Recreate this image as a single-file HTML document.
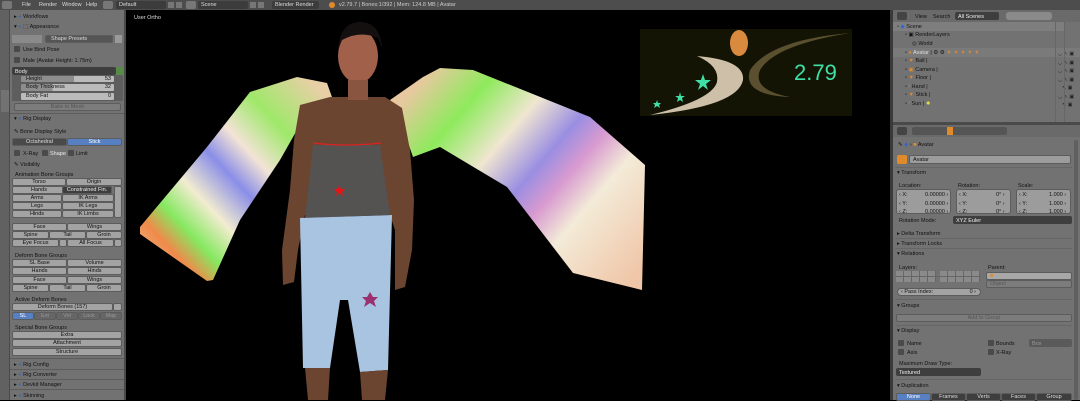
<!DOCTYPE html>
<html><head><meta charset="utf-8"><style>
*{margin:0;padding:0;box-sizing:border-box}
body{width:1080px;height:400px;overflow:hidden;background:#000;font-family:"Liberation Sans",sans-serif;font-size:5.5px;color:#111;position:relative}
.a{position:absolute;white-space:nowrap;line-height:1}
.b{position:absolute;background:#a3a3a3;border:1px solid #5c5c5c;border-radius:2px;font-size:5.5px;color:#111;text-align:center;white-space:nowrap;overflow:hidden}
.d{position:absolute;background:#3e3e3e;border-radius:2px;color:#eee;font-size:5.5px;padding-left:3px;white-space:nowrap}
.t{position:absolute;font-size:5.5px;color:#111;white-space:nowrap}
.cb{position:absolute;width:6px;height:6px;background:#4a4a4a;border-radius:1px}
.bl{background:#5680c2!important;color:#fff}
</style></head><body>
<!-- top header -->
<div class="a" style="left:0;top:0;width:1080px;height:10px;background:#4d4d4d"></div>
<div class="a" style="left:2px;top:1px;width:10px;height:8px;background:#777;border-radius:2px"></div>
<div class="a" style="left:22px;top:3px;color:#ddd">File</div>
<div class="a" style="left:39px;top:3px;color:#ddd">Render</div>
<div class="a" style="left:62px;top:3px;color:#ddd">Window</div>
<div class="a" style="left:86px;top:3px;color:#ddd">Help</div>
<div class="a" style="left:103px;top:1px;width:10px;height:8px;background:#777;border-radius:2px"></div>
<div class="a" style="left:116px;top:1px;width:50px;height:8px;background:#3c3c3c;border-radius:2px;color:#ddd;padding:2px 3px">Default</div>
<div class="a" style="left:168px;top:2px;width:6px;height:6px;background:#777"></div>
<div class="a" style="left:176px;top:2px;width:6px;height:6px;background:#777"></div>
<div class="a" style="left:186px;top:1px;width:10px;height:8px;background:#777;border-radius:2px"></div>
<div class="a" style="left:198px;top:1px;width:50px;height:8px;background:#3c3c3c;border-radius:2px;color:#ddd;padding:2px 3px">Scene</div>
<div class="a" style="left:250px;top:2px;width:6px;height:6px;background:#777"></div>
<div class="a" style="left:258px;top:2px;width:6px;height:6px;background:#777"></div>
<div class="a" style="left:272px;top:1px;width:47px;height:8px;background:#3c3c3c;border-radius:2px;color:#ddd;padding:2px 3px">Blender Render</div>
<div class="a" style="left:329px;top:2px;width:6px;height:6px;background:#e08a2a;border-radius:3px"></div>
<div class="a" style="left:339px;top:3px;color:#ccc">v2.79.7 | Bones:1/392 | Mem: 124.8 MB | Avatar</div>

<!-- left panel -->
<div class="a" style="left:0;top:10px;width:126px;height:390px;background:#727272"></div>
<div class="a" style="left:0;top:10px;width:10px;height:390px;background:#616161;border-right:1px solid #4a4a4a"></div>
<div class="a" style="left:1px;top:90px;width:8px;height:22px;background:#727272"></div>
<div class="a" style="left:124px;top:10px;width:2px;height:390px;background:#4a4a4a"></div>
<div class="t" style="left:14px;top:14px">▸ <span style="color:#3a6db0">●</span> Workflows</div>
<div class="t" style="left:14px;top:24px">▾ <span style="color:#3a6db0">●</span> ⬚ Appearance</div>
<div class="a" style="left:12px;top:35px;width:30px;height:8px;background:#8a8a8a"></div>
<div class="b" style="left:45px;top:35px;width:68px;height:8px;background:#555;color:#ddd;text-align:left;padding-left:5px">Shape Presets</div>
<div class="a" style="left:115px;top:35px;width:7px;height:8px;background:#999"></div>
<div class="cb" style="left:14px;top:46px"></div><div class="t" style="left:23px;top:47px">Use Bind Pose</div>
<div class="cb" style="left:14px;top:57px"></div><div class="t" style="left:23px;top:58px">Male (Avatar Height: 1.75m)</div>
<div class="d" style="left:12px;top:67px;width:104px;height:8px;padding-top:1.5px">Body</div>
<div class="a" style="left:116px;top:67px;width:7px;height:8px;background:#5a8a4a"></div>
<div class="a" style="left:12px;top:75px;width:111px;height:26px;background:#5e5e5e"></div>
<div class="b" style="left:20px;top:75px;width:95px;height:8px;text-align:left;padding-left:5px;background:linear-gradient(90deg,#8d8d8d 57%,#bbb 57%)">Height<span style="position:absolute;right:3px">53</span></div>
<div class="b" style="left:20px;top:83px;width:95px;height:9px;text-align:left;padding-left:5px;background:linear-gradient(90deg,#8d8d8d 34%,#bbb 34%)">Body Thickness<span style="position:absolute;right:3px">32</span></div>
<div class="b" style="left:20px;top:92px;width:95px;height:9px;text-align:left;padding-left:5px;background:#bbb">Body Fat<span style="position:absolute;right:3px">0</span></div>
<div class="b" style="left:14px;top:103px;width:107px;height:8px;background:#7c7c7c;color:#555">Bake to Mesh</div>
<div class="a" style="left:10px;top:113px;width:114px;height:1px;background:#5c5c5c"></div>
<div class="t" style="left:14px;top:116px">▾ <span style="color:#3a6db0">●</span> Rig Display</div>
<div class="t" style="left:14px;top:129px">✎ Bone Display Style</div>
<div class="b" style="left:12px;top:138px;width:55px;height:8px;background:#4a4a4a;color:#ddd">Octahedral</div>
<div class="b bl" style="left:67px;top:138px;width:55px;height:8px">Stick</div>
<div class="cb" style="left:14px;top:150px"></div><div class="t" style="left:23px;top:151px">X-Ray</div>
<div class="cb" style="left:42px;top:150px"></div><div class="t" style="left:50px;top:151px;color:#eee">Shape</div>
<div class="cb" style="left:68px;top:150px"></div><div class="t" style="left:76px;top:151px">Limit</div>
<div class="t" style="left:14px;top:162px">✎ Visibility</div>
<div class="t" style="left:15px;top:172px">Animation Bone Groups</div>
<div class="b" style="left:12px;top:178px;width:54px;height:8px">Torso</div>
<div class="b" style="left:66px;top:178px;width:56px;height:8px">Origin</div>
<div class="b" style="left:12px;top:186px;width:54px;height:8px">Hands</div>
<div class="b" style="left:62px;top:186px;width:50px;height:8px;background:#3e3e3e;color:#eee">Constrained Fin.</div>
<div class="b" style="left:12px;top:194px;width:50px;height:8px">Arms</div><div class="b" style="left:62px;top:194px;width:52px;height:8px">IK Arms</div>
<div class="b" style="left:12px;top:202px;width:50px;height:8px">Legs</div><div class="b" style="left:62px;top:202px;width:52px;height:8px">IK Legs</div>
<div class="b" style="left:12px;top:210px;width:50px;height:8px">Hinds</div><div class="b" style="left:62px;top:210px;width:52px;height:8px">IK Limbs</div>
<div class="b" style="left:114px;top:186px;width:8px;height:32px"></div>
<div class="b" style="left:12px;top:223px;width:55px;height:8px">Face</div><div class="b" style="left:67px;top:223px;width:55px;height:8px">Wings</div>
<div class="b" style="left:12px;top:231px;width:37px;height:8px">Spine</div><div class="b" style="left:49px;top:231px;width:37px;height:8px">Tail</div><div class="b" style="left:86px;top:231px;width:36px;height:8px">Groin</div>
<div class="b" style="left:12px;top:239px;width:47px;height:8px">Eye Focus</div><div class="b" style="left:59px;top:239px;width:8px;height:8px"></div><div class="b" style="left:67px;top:239px;width:47px;height:8px">All Focus</div><div class="b" style="left:114px;top:239px;width:8px;height:8px"></div>
<div class="t" style="left:15px;top:253px">Deform Bone Groups</div>
<div class="b" style="left:12px;top:259px;width:55px;height:8px">SL Base</div><div class="b" style="left:67px;top:259px;width:55px;height:8px">Volume</div>
<div class="b" style="left:12px;top:267px;width:55px;height:8px">Hands</div><div class="b" style="left:67px;top:267px;width:55px;height:8px">Hinds</div>
<div class="b" style="left:12px;top:276px;width:55px;height:8px">Face</div><div class="b" style="left:67px;top:276px;width:55px;height:8px">Wings</div>
<div class="b" style="left:12px;top:284px;width:37px;height:8px">Spine</div><div class="b" style="left:49px;top:284px;width:37px;height:8px">Tail</div><div class="b" style="left:86px;top:284px;width:36px;height:8px">Groin</div>
<div class="t" style="left:15px;top:297px">Active Deform Bones</div>
<div class="b" style="left:12px;top:303px;width:101px;height:8px">Deform Bones (157)</div><div class="b" style="left:113px;top:303px;width:9px;height:8px"></div>
<div class="b bl" style="left:12px;top:312px;width:22px;height:8px">SL</div>
<div class="b" style="left:34px;top:312px;width:22px;height:8px;background:#666;color:#999">Ext</div>
<div class="b" style="left:56px;top:312px;width:22px;height:8px;background:#666;color:#999">Vol</div>
<div class="b" style="left:78px;top:312px;width:22px;height:8px;background:#666;color:#999">Lock</div>
<div class="b" style="left:100px;top:312px;width:22px;height:8px;background:#666;color:#999">Map</div>
<div class="t" style="left:15px;top:325px">Special Bone Groups</div>
<div class="b" style="left:12px;top:331px;width:110px;height:8px">Extra</div>
<div class="b" style="left:12px;top:339px;width:110px;height:8px">Attachment</div>
<div class="b" style="left:12px;top:348px;width:110px;height:8px">Structure</div>
<div class="a" style="left:10px;top:358px;width:114px;height:1px;background:#5c5c5c"></div>
<div class="t" style="left:14px;top:362px">▸ <span style="color:#3a6db0">●</span> Rig Config</div>
<div class="a" style="left:10px;top:369px;width:114px;height:1px;background:#5c5c5c"></div>
<div class="t" style="left:14px;top:372px">▸ <span style="color:#3a6db0">●</span> Rig Converter</div>
<div class="a" style="left:10px;top:379px;width:114px;height:1px;background:#5c5c5c"></div>
<div class="t" style="left:14px;top:382px">▸ <span style="color:#3a6db0">●</span> Devkit Manager</div>
<div class="a" style="left:10px;top:389px;width:114px;height:1px;background:#5c5c5c"></div>
<div class="t" style="left:14px;top:393px">▸ <span style="color:#3a6db0">●</span> Skinning</div>

<!-- viewport -->
<div class="a" style="left:126px;top:10px;width:764px;height:390px;background:#000"></div>
<div class="a" style="left:134px;top:16px;color:#ddd">User Ortho</div>
<svg class="a" style="left:0;top:0" width="1080" height="400">
<defs>
<linearGradient id="lw" x1="140" y1="260" x2="320" y2="90" gradientUnits="userSpaceOnUse">
<stop offset="0" stop-color="#e6b98a"/><stop offset=".12" stop-color="#f08a4a"/><stop offset=".22" stop-color="#86e860"/><stop offset=".35" stop-color="#f2ecd0"/><stop offset=".5" stop-color="#8a8ee8"/><stop offset=".62" stop-color="#f3e3d6"/><stop offset=".78" stop-color="#9fe86a"/><stop offset="1" stop-color="#e8cfa6"/></linearGradient>
<linearGradient id="rw" x1="420" y1="80" x2="640" y2="270" gradientUnits="userSpaceOnUse">
<stop offset="0" stop-color="#e8c8a0"/><stop offset=".18" stop-color="#8eea5c"/><stop offset=".35" stop-color="#f0e6d0"/><stop offset=".5" stop-color="#9a8ee2"/><stop offset=".6" stop-color="#d89ad0"/><stop offset=".72" stop-color="#f3ebd8"/><stop offset="1" stop-color="#f0c6a8"/></linearGradient>
</defs>
<polygon points="140,227 207,147 250,92 297,77 327,83 333,100 307,113 297,130 280,160 240,220 213,280 207,281 140,234" fill="url(#lw)"/>
<polygon points="390,100 423,77 440,68 473,70 590,117 645,165 642,290 573,273 507,187 440,147 413,157 400,120" fill="url(#rw)"/>
<!-- body -->
<path d="M300,105 L330,97 L385,97 L402,108 L410,150 L414,200 L412,250 L405,287 L395,290 L395,230 L390,215 L305,215 L298,250 L294,282 L283,285 L282,250 L290,190 L294,140 Z" fill="#6b4530"/>
<path d="M313,145 L380,145 L390,215 L305,218 Z" fill="#555252"/>
<path d="M313,143 Q345,147 381,143" stroke="#d22" stroke-width="1.2" fill="none"/>
<path d="M300,218 L392,215 L388,370 L360,372 L348,300 L340,300 L330,368 L303,368 Z" fill="#a8c4e0"/>
<path d="M305,368 L330,368 L328,400 L308,400 Z M360,372 L388,370 L385,400 L362,400 Z" fill="#6b4530"/>
<ellipse cx="358" cy="56" rx="20" ry="27" fill="#a0604a"/>
<path d="M338,50 Q340,22 360,22 Q380,22 382,48 L378,38 Q360,30 342,40 Z" fill="#141010"/>
<rect x="348" y="80" width="20" height="20" fill="#8a5540"/>
<polygon points="339,185 341,189 345,189 342,192 343,196 339,193 336,196 337,192 334,189 338,189" fill="#e11"/>
<polygon points="370,292 373,297 378,297 374,301 376,307 370,303 364,307 366,301 362,297 367,297" fill="#9a3070"/>
<!-- logo -->
<rect x="640" y="29" width="212" height="87" fill="#141405"/>
<ellipse cx="739" cy="43" rx="9" ry="13" fill="#d98a3e"/>
<path d="M697,56 Q745,60 743,80 Q738,106 650,115 Q712,100 717,82 Q720,66 697,56 Z" fill="#cdbfa8"/>
<path d="M850,33 Q770,40 750,70 Q742,95 790,97 Q752,90 760,70 Q775,45 850,33 Z" fill="#5a5030"/>
<text x="794" y="80" font-family="Liberation Sans" font-size="22" fill="#3ee0a6">2.79</text>
<polygon points="703,74 705,80 711,80 706,84 708,90 703,86 698,90 700,84 695,80 701,80" fill="#3ee0a6"/>
<polygon points="680,92 681,96 685,96 682,98 683,102 680,100 677,102 678,98 675,96 679,96" fill="#3ee0a6"/>
<polygon points="657,100 658,103 661,103 659,105 660,108 657,106 654,108 655,105 653,103 656,103" fill="#3ee0a6"/>
</svg>

<!-- right side -->
<div class="a" style="left:890px;top:10px;width:190px;height:390px;background:#727272"></div>
<div class="a" style="left:890px;top:10px;width:3px;height:390px;background:#3a3a3a"></div>
<div class="a" style="left:893px;top:10px;width:187px;height:12px;background:#6a6a6a"></div>
<div class="a" style="left:897px;top:12px;width:10px;height:8px;background:#444;border-radius:2px"></div>
<div class="t" style="left:915px;top:14px">View</div><div class="t" style="left:933px;top:14px">Search</div>
<div class="d" style="left:955px;top:12px;width:44px;height:8px;padding-top:1.5px">All Scenes</div>
<div class="a" style="left:1006px;top:12px;width:46px;height:8px;background:#8a8a8a;border-radius:3px"></div>
<div class="a" style="left:893px;top:22px;width:172px;height:9px;background:#7e7e7e"></div>
<div class="t" style="left:897px;top:24px">▫ <span style="color:#36c">◆</span> Scene</div>
<div class="t" style="left:905px;top:32px">▫ ▣ RenderLayers</div>
<div class="t" style="left:912px;top:41px">◎ World</div>
<div class="a" style="left:893px;top:48px;width:187px;height:9px;background:#7a7a7a"></div>
<div class="t" style="left:905px;top:50px">▫ <span style="color:#e08a2a">●</span> <span style="color:#ddd">Avatar</span> | ⚙ ⚙ <span style="color:#c84">▼ ▼ ▼ ▼ ▼</span></div>
<div class="t" style="left:905px;top:58px">▫ <span style="color:#e08a2a">▼</span> Ball |</div>
<div class="t" style="left:905px;top:67px">▫ <span style="color:#e08a2a">▣</span> Camera |</div>
<div class="t" style="left:905px;top:75px">▫ <span style="color:#e08a2a">▼</span> Floor |</div>
<div class="t" style="left:905px;top:84px">▫ <span style="color:#e08a2a">!</span> Hand |</div>
<div class="t" style="left:905px;top:92px">▫ <span style="color:#e08a2a">▼</span> Stick |</div>
<div class="t" style="left:905px;top:101px">▫ <span style="color:#e08a2a">!</span> Sun | <span style="color:#dd4">✹</span></div>
<div class="t" style="left:1058px;top:50px;color:#222;line-height:8.5px;font-size:5px">◡ ↖ ▣<br>◡ ↖ ▣<br>◡ ↖ ▣<br>◡ ↖ ▣<br>&nbsp;&nbsp;&nbsp;↖ ▣<br>◡ ↖ ▣<br>&nbsp;&nbsp;&nbsp;↖ ▣</div>
<div class="a" style="left:1055px;top:22px;width:1px;height:100px;background:#666"></div>
<div class="a" style="left:1064px;top:22px;width:1px;height:100px;background:#666"></div>
<div class="a" style="left:893px;top:122px;width:187px;height:3px;background:#4a4a4a"></div>
<div class="a" style="left:893px;top:125px;width:187px;height:12px;background:#6a6a6a"></div>
<div class="a" style="left:897px;top:127px;width:10px;height:8px;background:#444;border-radius:2px"></div>
<div class="a" style="left:912px;top:127px;width:95px;height:8px;background:linear-gradient(90deg,#555 0 37%,#e08a2a 37% 43%,#555 43%);border-radius:2px"></div>
<div class="t" style="left:898px;top:142px">✎ <span style="color:#36c">◆</span> › <span style="color:#e08a2a">■</span> Avatar</div>
<div class="a" style="left:897px;top:155px;width:10px;height:9px;background:#e08a2a;border-radius:2px"></div>
<div class="b" style="left:909px;top:155px;width:162px;height:9px;text-align:left;padding-left:3px;padding-top:1px;background:#9c9c9c">Avatar</div>
<div class="a" style="left:1074px;top:140px;width:4px;height:260px;background:#5f5f5f;border-radius:2px"></div>
<div class="t" style="left:897px;top:170px">▾ Transform</div>
<div class="a" style="left:895px;top:167px;width:177px;height:1px;background:#666"></div>
<div class="t" style="left:899px;top:183px">Location:</div><div class="t" style="left:958px;top:183px">Rotation:</div><div class="t" style="left:1018px;top:183px">Scale:</div>
<div class="b" style="left:896px;top:189px;width:55px;height:25px;background:#9c9c9c;border-radius:3px"></div>
<div class="b" style="left:956px;top:189px;width:55px;height:25px;background:#9c9c9c;border-radius:3px"></div>
<div class="b" style="left:1016px;top:189px;width:55px;height:25px;background:#9c9c9c;border-radius:3px"></div>
<div class="t" style="left:899px;top:191px;line-height:8.5px">‹ X:<br>‹ Y:<br>‹ Z:</div><div class="t" style="left:925px;top:191px;line-height:8.5px;text-align:right">0.00000 ›<br>0.00000 ›<br>0.00000 ›</div>
<div class="t" style="left:959px;top:191px;line-height:8.5px">‹ X:<br>‹ Y:<br>‹ Z:</div><div class="t" style="left:996px;top:191px;line-height:8.5px;text-align:right">0° ›<br>0° ›<br>0° ›</div>
<div class="t" style="left:1019px;top:191px;line-height:8.5px">‹ X:<br>‹ Y:<br>‹ Z:</div><div class="t" style="left:1049px;top:191px;line-height:8.5px;text-align:right">1.000 ›<br>1.000 ›<br>1.000 ›</div>
<div class="t" style="left:899px;top:218px">Rotation Mode:</div>
<div class="d" style="left:953px;top:216px;width:119px;height:8px;padding-top:1.5px">XYZ Euler</div>
<div class="t" style="left:897px;top:231px">▸ Delta Transform</div>
<div class="a" style="left:895px;top:238px;width:177px;height:1px;background:#666"></div>
<div class="t" style="left:897px;top:241px">▸ Transform Locks</div>
<div class="a" style="left:895px;top:248px;width:177px;height:1px;background:#666"></div>
<div class="t" style="left:897px;top:251px">▾ Relations</div>
<div class="t" style="left:899px;top:265px">Layers:</div><div class="t" style="left:988px;top:265px">Parent:</div>
<div class="a" style="left:896px;top:271px;width:40px;height:11px;background:repeating-linear-gradient(90deg,#8a8a8a 0 7px,#666 7px 8px)"></div>
<div class="a" style="left:940px;top:271px;width:40px;height:11px;background:repeating-linear-gradient(90deg,#8a8a8a 0 7px,#666 7px 8px)"></div>
<div class="a" style="left:896px;top:276px;width:84px;height:1px;background:#666"></div>
<div class="b" style="left:986px;top:272px;width:86px;height:8px;background:#a8a8a8;text-align:left;padding-left:3px"><span style="color:#e08a2a">■</span></div>
<div class="b" style="left:986px;top:280px;width:86px;height:8px;background:#7c7c7c;color:#555;text-align:left;padding-left:3px">Object</div>
<div class="b" style="left:897px;top:288px;width:84px;height:8px;border-radius:4px;text-align:left;padding-left:3px">‹ Pass Index:<span style="position:absolute;right:4px">0 ›</span></div>
<div class="a" style="left:895px;top:299px;width:177px;height:1px;background:#666"></div>
<div class="t" style="left:897px;top:303px">▾ Groups</div>
<div class="b" style="left:896px;top:314px;width:176px;height:8px;background:#7c7c7c;color:#555">Add to Group</div>
<div class="a" style="left:895px;top:325px;width:177px;height:1px;background:#666"></div>
<div class="t" style="left:897px;top:328px">▾ Display</div>
<div class="cb" style="left:898px;top:340px"></div><div class="t" style="left:907px;top:341px">Name</div>
<div class="cb" style="left:988px;top:340px"></div><div class="t" style="left:996px;top:341px">Bounds</div>
<div class="d" style="left:1029px;top:339px;width:43px;height:8px;background:#5a5a5a;color:#999;padding-top:1.5px">Box</div>
<div class="cb" style="left:898px;top:349px"></div><div class="t" style="left:907px;top:350px">Axis</div>
<div class="cb" style="left:988px;top:349px"></div><div class="t" style="left:996px;top:350px">X-Ray</div>
<div class="t" style="left:899px;top:361px">Maximum Draw Type:</div>
<div class="d" style="left:896px;top:368px;width:85px;height:8px;padding-top:1.5px">Textured</div>
<div class="a" style="left:895px;top:379px;width:177px;height:1px;background:#666"></div>
<div class="t" style="left:897px;top:383px">▾ Duplication</div>
<div class="b bl" style="left:896px;top:393px;width:35px;height:8px">None</div>
<div class="b" style="left:931px;top:393px;width:35px;height:8px;background:#3e3e3e;color:#ddd">Frames</div>
<div class="b" style="left:966px;top:393px;width:35px;height:8px;background:#3e3e3e;color:#ddd">Verts</div>
<div class="b" style="left:1001px;top:393px;width:35px;height:8px;background:#3e3e3e;color:#ddd">Faces</div>
<div class="b" style="left:1036px;top:393px;width:36px;height:8px;background:#3e3e3e;color:#ddd">Group</div>
</body></html>
